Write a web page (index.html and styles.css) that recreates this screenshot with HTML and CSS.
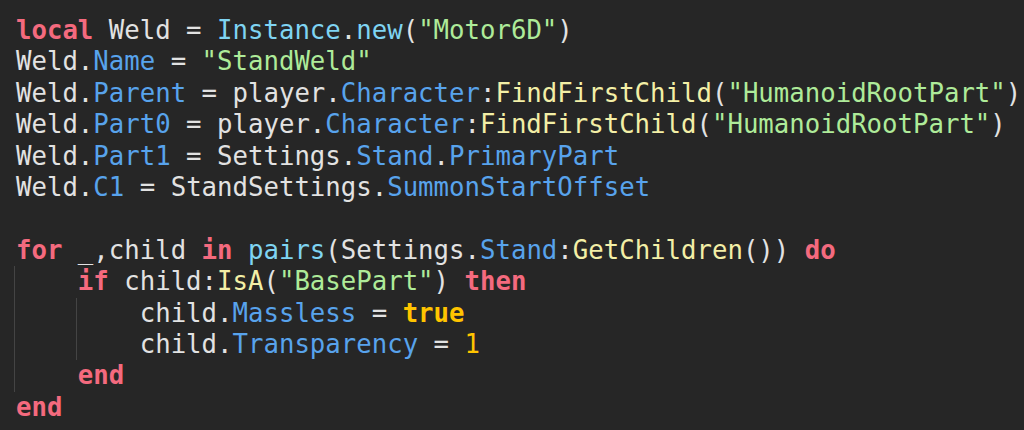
FILE: index.html
```html
<!DOCTYPE html>
<html>
<head>
<meta charset="utf-8">
<link rel="stylesheet" href="styles.css">
</head>
<body>
<pre class="code"><div class="ln"><span class="kw">local</span> Weld = <span class="bi">Instance</span>.<span class="bi">new</span>(<span class="str">"Motor6D"</span>)</div><div class="ln">Weld.<span class="pr">Name</span> = <span class="str">"StandWeld"</span></div><div class="ln">Weld.<span class="pr">Parent</span> = player.<span class="pr">Character</span>:<span class="fn">FindFirstChild</span>(<span class="str">"HumanoidRootPart"</span>)</div><div class="ln">Weld.<span class="pr">Part0</span> = player.<span class="pr">Character</span>:<span class="fn">FindFirstChild</span>(<span class="str">"HumanoidRootPart"</span>)</div><div class="ln">Weld.<span class="pr">Part1</span> = Settings.<span class="pr">Stand</span>.<span class="pr">PrimaryPart</span></div><div class="ln">Weld.<span class="pr">C1</span> = StandSettings.<span class="pr">SummonStartOffset</span></div><div class="ln"> </div><div class="ln"><span class="kw">for</span> _,child <span class="kw">in</span> <span class="bi">pairs</span>(Settings.<span class="pr">Stand</span>:<span class="fn">GetChildren</span>()) <span class="kw">do</span></div><div class="ln"><span class="ig"></span><span class="kw">if</span> child:<span class="fn">IsA</span>(<span class="str">"BasePart"</span>) <span class="kw">then</span></div><div class="ln"><span class="ig"></span><span class="ig"></span>child.<span class="pr">Massless</span> = <span class="cst">true</span></div><div class="ln"><span class="ig"></span><span class="ig"></span>child.<span class="pr">Transparency</span> = <span class="num">1</span></div><div class="ln"><span class="ig"></span><span class="kw">end</span></div><div class="ln"><span class="kw">end</span></div></pre>
</body>
</html>
```

FILE: styles.css
```css
html, body {
  margin: 0;
  padding: 0;
  background: #262626;
  width: 1024px;
  height: 430px;
  overflow: hidden;
}

.code {
  margin: 0;
  padding: 15px 0 0 16px;
  font-family: "DejaVu Sans Mono", "Liberation Mono", monospace;
  font-size: 25.7px;
  line-height: 31.4px;
  color: #e2e2e2;
  white-space: pre;
}

.ln {
  height: 31.4px;
}

.ig {
  display: inline-block;
  width: 4ch;
  height: 31.4px;
  vertical-align: top;
  box-shadow: inset 1px 0 0 #444444;
  margin-left: -2px;
  margin-right: 2px;
}

.kw {
  color: #f46a7e;
  font-weight: bold;
}

.bi {
  color: #7fd4f2;
}

.pr {
  color: #58a3ec;
}

.str {
  color: #aeeb99;
}

.fn {
  color: #f3efa6;
}

.cst {
  color: #ffc400;
  font-weight: bold;
}

.num {
  color: #ffc400;
}
```
